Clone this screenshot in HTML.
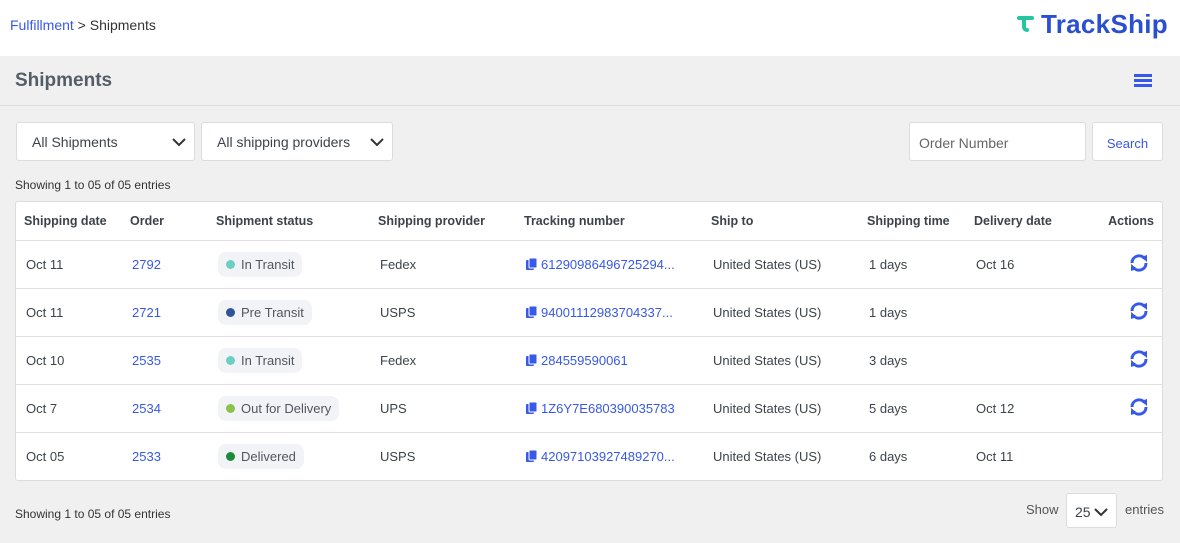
<!DOCTYPE html>
<html><head><style>
*{box-sizing:border-box;margin:0;padding:0}
body{width:1180px;height:543px;background:#f0f0f1;font-family:"Liberation Sans",sans-serif;font-size:13px;color:#3c434a;position:relative;overflow:hidden}
.top{position:absolute;left:0;top:0;width:1180px;height:56px;background:#fff}
.crumb{position:absolute;left:10px;top:17px;font-size:14px;color:#333}
.crumb a{color:#3858e9}
.logo{position:absolute;left:1016px;top:9px;font-size:26px;font-weight:bold;color:#2a4fd0;letter-spacing:0.3px}
.hdr{position:absolute;left:0;top:56px;width:1180px;height:50px;border-bottom:1px solid #ddd}
.hdr h1{position:absolute;left:15px;top:14px;font-size:19px;color:#555d66;font-weight:bold}
.menu{position:absolute;left:1134px;top:74px;width:18px}
.menu i{display:block;height:2.5px;background:#3858e9;margin-bottom:2.5px}
.sel{position:absolute;top:122px;height:39px;background:#fff;border:1px solid #dcdcde;border-radius:3px;padding:11px 15px;font-size:14px;color:#3c434a}
.sel svg{position:absolute;right:8px;top:14px}
.inp{position:absolute;left:909px;top:122px;width:177px;height:39px;background:#fff;border:1px solid #dcdcde;border-radius:3px;padding:12px 9px;font-size:14px;color:#666}
.btn{position:absolute;left:1092px;top:122px;width:71px;height:39px;background:#fff;border:1px solid #dcdcde;border-radius:3px;padding:13px 0;text-align:center;font-size:13px;color:#3858e9}
.info{position:absolute;left:15px;font-size:12px;color:#333}
table{position:absolute;left:15px;top:201px;width:1148px;background:#fff;border:1px solid #dcdcde;border-radius:3px;border-collapse:separate;border-spacing:0}
th{height:39px;text-align:left;font-size:12.5px;font-weight:bold;color:#3c434a;padding-left:8px;border-bottom:1px solid #e0e0e0}
td{height:48px;padding-left:10px;border-bottom:1px solid #e0e0e0;color:#3c434a}
tr:last-child td{border-bottom:none;height:47px}
td a{color:#3858e9}
.b{display:inline-block;background:#f2f3f7;border-radius:8px;padding:5px 8px 5px 8px;color:#50575e}
.b i{display:inline-block;width:9px;height:9px;border-radius:50%;margin-right:6px}
.tn{color:#3858e9}
.tn svg{vertical-align:-1px;margin-right:4px}
.show{position:absolute;left:1026px;top:502px;font-size:13px;color:#555}
.num{position:absolute;left:1066px;top:493px;width:51px;height:35px;background:#fff;border:1px solid #dcdcde;border-radius:3px;padding:10px 8px;font-size:14px}
.rf{text-align:right;padding-right:12px}
</style></head><body>
<div class="top"><div class="crumb"><a>Fulfillment</a> &gt; Shipments</div>
<div class="logo"><svg width="20" height="22" viewBox="0 0 20 22" style="vertical-align:-2px;margin-right:5px"><path d="M3 5h13M8 5v9a3 3 0 0 0 3 3" stroke="#23c6a0" stroke-width="4" fill="none" stroke-linecap="round"/></svg>TrackShip</div></div>
<div class="hdr"><h1>Shipments</h1></div>
<div class="menu"><i></i><i></i><i></i></div>
<div class="sel" style="left:16px;width:179px">All Shipments<svg width="14" height="10"><path d="M1 2l6 6 6-6" stroke="#333" stroke-width="2" fill="none"/></svg></div>
<div class="sel" style="left:201px;width:192px">All shipping providers<svg width="14" height="10"><path d="M1 2l6 6 6-6" stroke="#333" stroke-width="2" fill="none"/></svg></div>
<div class="inp">Order Number</div>
<div class="btn">Search</div>
<div class="info" style="top:178px">Showing 1 to 05 of 05 entries</div>
<table>
<tr><th style="width:106px">Shipping date</th><th style="width:86px">Order</th><th style="width:162px">Shipment status</th><th style="width:146px">Shipping provider</th><th style="width:187px">Tracking number</th><th style="width:156px">Ship to</th><th style="width:107px">Shipping time</th><th>Delivery date</th><th style="text-align:right;padding-right:8px">Actions</th></tr>
<tr><td>Oct 11</td><td><a>2792</a></td><td><span class="b"><i style="background:#6bcfc4"></i>In Transit</span></td><td>Fedex</td><td class="tn"><svg width="11" height="12"><rect x="0" y="2" width="8" height="10" rx="1" fill="#3858e9"/><rect x="3" y="0" width="8" height="10" rx="1" fill="#3858e9" stroke="#fff"/></svg>61290986496725294...</td><td>United States (US)</td><td>1 days</td><td>Oct 16</td><td class="rf"><svg width="22" height="20" viewBox="0 0 22 20"><path d="M4 10a7 7 0 0 1 12.5-4.5M18 10a7 7 0 0 1-12.5 4.5" stroke="#3858e9" stroke-width="3" fill="none"/><path d="M13 4l6-2v7z M9 16l-6 2v-7z" fill="#3858e9"/></svg></td></tr>
<tr><td>Oct 11</td><td><a>2721</a></td><td><span class="b"><i style="background:#2f5597"></i>Pre Transit</span></td><td>USPS</td><td class="tn"><svg width="11" height="12"><rect x="0" y="2" width="8" height="10" rx="1" fill="#3858e9"/><rect x="3" y="0" width="8" height="10" rx="1" fill="#3858e9" stroke="#fff"/></svg>94001112983704337...</td><td>United States (US)</td><td>1 days</td><td></td><td class="rf"><svg width="22" height="20" viewBox="0 0 22 20"><path d="M4 10a7 7 0 0 1 12.5-4.5M18 10a7 7 0 0 1-12.5 4.5" stroke="#3858e9" stroke-width="3" fill="none"/><path d="M13 4l6-2v7z M9 16l-6 2v-7z" fill="#3858e9"/></svg></td></tr>
<tr><td>Oct 10</td><td><a>2535</a></td><td><span class="b"><i style="background:#6bcfc4"></i>In Transit</span></td><td>Fedex</td><td class="tn"><svg width="11" height="12"><rect x="0" y="2" width="8" height="10" rx="1" fill="#3858e9"/><rect x="3" y="0" width="8" height="10" rx="1" fill="#3858e9" stroke="#fff"/></svg>284559590061</td><td>United States (US)</td><td>3 days</td><td></td><td class="rf"><svg width="22" height="20" viewBox="0 0 22 20"><path d="M4 10a7 7 0 0 1 12.5-4.5M18 10a7 7 0 0 1-12.5 4.5" stroke="#3858e9" stroke-width="3" fill="none"/><path d="M13 4l6-2v7z M9 16l-6 2v-7z" fill="#3858e9"/></svg></td></tr>
<tr><td>Oct 7</td><td><a>2534</a></td><td><span class="b"><i style="background:#8bc34a"></i>Out for Delivery</span></td><td>UPS</td><td class="tn"><svg width="11" height="12"><rect x="0" y="2" width="8" height="10" rx="1" fill="#3858e9"/><rect x="3" y="0" width="8" height="10" rx="1" fill="#3858e9" stroke="#fff"/></svg>1Z6Y7E680390035783</td><td>United States (US)</td><td>5 days</td><td>Oct 12</td><td class="rf"><svg width="22" height="20" viewBox="0 0 22 20"><path d="M4 10a7 7 0 0 1 12.5-4.5M18 10a7 7 0 0 1-12.5 4.5" stroke="#3858e9" stroke-width="3" fill="none"/><path d="M13 4l6-2v7z M9 16l-6 2v-7z" fill="#3858e9"/></svg></td></tr>
<tr><td>Oct 05</td><td><a>2533</a></td><td><span class="b"><i style="background:#1e8a3c"></i>Delivered</span></td><td>USPS</td><td class="tn"><svg width="11" height="12"><rect x="0" y="2" width="8" height="10" rx="1" fill="#3858e9"/><rect x="3" y="0" width="8" height="10" rx="1" fill="#3858e9" stroke="#fff"/></svg>42097103927489270...</td><td>United States (US)</td><td>6 days</td><td>Oct 11</td><td></td></tr>
</table>
<div class="info" style="top:507px">Showing 1 to 05 of 05 entries</div>
<div class="show">Show</div>
<div class="num">25<svg width="14" height="10" style="position:absolute;right:8px;top:13px"><path d="M1 2l6 6 6-6" stroke="#333" stroke-width="2" fill="none"/></svg></div>
<div class="show" style="left:1125px">entries</div>
</body></html>
